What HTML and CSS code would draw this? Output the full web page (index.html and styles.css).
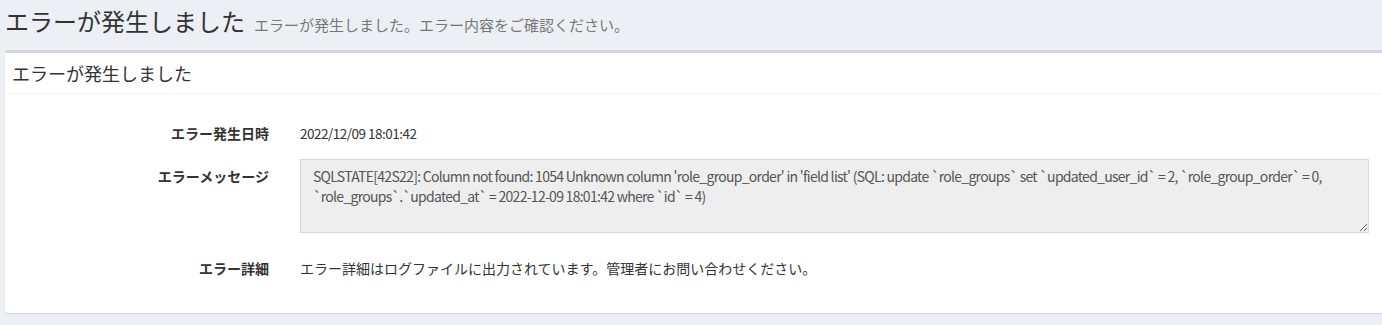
FILE: index.html
```html
<!DOCTYPE html>
<html lang="ja">
<head>
<meta charset="utf-8">
<title>エラーが発生しました</title>
<link rel="stylesheet" href="styles.css">
</head>
<body>
<div class="wrapper">
  <section class="content-header">
    <h1 class="page-title">エラーが発生しました<small class="page-sub">エラーが発生しました。エラー内容をご確認ください。</small></h1>
  </section>
  <section class="content">
    <div class="box">
      <div class="box-header">
        <h3 class="box-title">エラーが発生しました</h3>
      </div>
      <div class="box-body">
        <div class="form-row row-date">
          <div class="label">エラー発生日時</div>
          <div class="value static date">2022/12/09 18:01:42</div>
        </div>
        <div class="form-row row-msg">
          <div class="label">エラーメッセージ</div>
          <div class="value"><textarea class="msg" rows="3" readonly>SQLSTATE[42S22]: Column not found: 1054 Unknown column 'role_group_order' in 'field list' (SQL: update `role_groups` set `updated_user_id` = 2, `role_group_order` = 0, `role_groups`.`updated_at` = 2022-12-09 18:01:42 where `id` = 4)</textarea></div>
        </div>
        <div class="form-row row-detail">
          <div class="label">エラー詳細</div>
          <div class="value static">エラー詳細はログファイルに出力されています。管理者にお問い合わせください。</div>
        </div>
      </div>
    </div>
  </section>
</div>
</body>
</html>
```

FILE: styles.css
```css
* { box-sizing: border-box; }
html, body {
  margin: 0;
  padding: 0;
  background: #ecf0f5;
  font-family: "Noto Sans CJK JP", "Noto Sans", sans-serif;
  font-size: 14px;
  line-height: 20px;
  color: #333;
  overflow: hidden;
}
.wrapper {
  width: 1382px;
  height: 325px;
}
.content-header {
  height: 50px;
  padding: 7px 0 0 5px;
}
.page-title {
  margin: 0;
  font-size: 24px;
  font-weight: 400;
  line-height: 28px;
  color: #333;
}
.page-sub {
  font-size: 15px;
  color: #777;
  padding-left: 9px;
  font-weight: 400;
}
.content {
  padding-left: 5px;
}
.box {
  width: 1392px;
  height: 263px;
  background: #fff;
  border-top: 3px solid #d2d6de;
  border-radius: 3px;
  box-shadow: 0 1px 1px rgba(0,0,0,0.12);
}
.box-header {
  height: 41px;
  padding: 10px 0 0 7px;
  border-bottom: 1px solid #f4f4f4;
}
.box-title {
  margin: 0;
  font-size: 18px;
  font-weight: 400;
  line-height: 20px;
  color: #333;
}
.box-body {
  padding-top: 22px;
}
.form-row {
  display: grid;
  grid-template-columns: 264px 1069px;
  column-gap: 31px;
}
.row-date { height: 43px; }
.row-msg { height: 92px; }
.label {
  text-align: right;
  font-weight: 700;
  padding-top: 7px;
  color: #333;
}
.static {
  padding-top: 7px;
  color: #333;
}
.date {
  font-size: 13.5px;
  letter-spacing: -0.5px;
}
.msg {
  display: block;
  width: 1069px;
  height: 74px;
  margin: 0;
  padding: 6px 12px;
  font-family: "Noto Sans CJK JP", "Noto Sans", sans-serif;
  font-size: 14px;
  letter-spacing: -0.72px;
  line-height: 20px;
  color: #555;
  background: #eee;
  border: 1px solid #d2d6de;
  border-radius: 0;
  outline: none;
}
```
